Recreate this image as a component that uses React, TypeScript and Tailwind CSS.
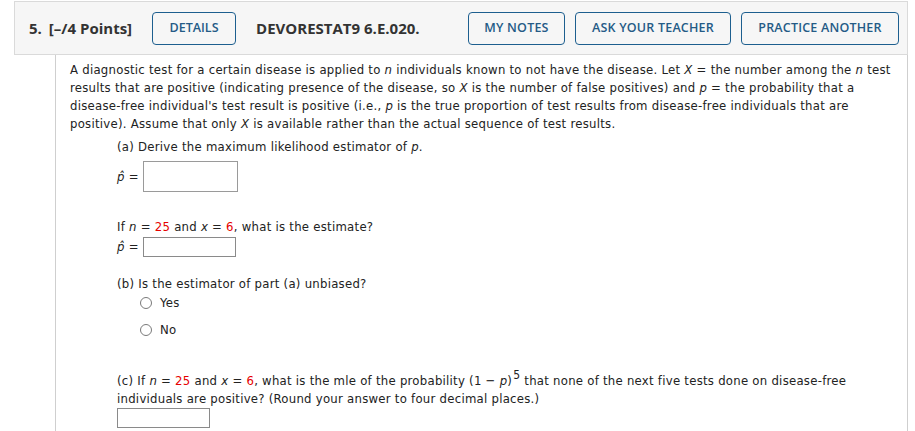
import React from "react";

const body = { fontFamily: '"DejaVu Sans Condensed", "DejaVu Sans", sans-serif' };
const head = { fontFamily: '"Open Sans", "Liberation Sans", sans-serif' };

const V = ({ children }: { children: React.ReactNode }) => <i className="italic">{children}</i>;
const Red = ({ children }: { children: React.ReactNode }) => <span className="text-[#e60000]">{children}</span>;
const PHat = () => <i className="italic">p̂</i>;

const HeaderButton = ({ label, width }: { label: string; width: string }) => (
  <button
    className={`h-[33px] ${width} rounded-[4px] border border-[#1d5f8f] bg-[#f6f6f6] text-[12.5px] font-semibold tracking-[0.2px] text-[#245b86] uppercase`}
  >
    {label}
  </button>
);

export default function App() {
  return (
    <div className="min-h-screen bg-white text-[#222]">
      <div className="ml-[14px] w-[894px] pt-px">
        <div className="flex h-[54px] items-center border border-[#dadada] bg-[#f6f6f6] pl-[14px] text-[#333]" style={head}>
          <span className="text-[15px] font-bold">5.</span>
          <span className="ml-[7px] text-[15px] font-bold">[–/4 Points]</span>
          <button className="ml-[20px] h-[33px] w-[84px] rounded-[4px] border border-[#1d5f8f] text-[12.5px] font-semibold text-[#245b86]">
            DETAILS
          </button>
          <span className="ml-[20px] text-[15px] font-bold">DEVORESTAT9 6.E.020.</span>
          <div className="ml-auto mr-[8px] flex gap-[10px]">
            <HeaderButton label="My Notes" width="w-[97px]" />
            <HeaderButton label="Ask Your Teacher" width="w-[156px]" />
            <HeaderButton label="Practice Another" width="w-[158px]" />
          </div>
        </div>

        <div
          className="ml-[41px] h-[376px] border-x border-[#cfcfcf] pl-[14px] pr-[10px] pt-[6px] text-[13px] leading-[18px] tracking-[0.26px]"
          style={body}
        >
          <p>
            A diagnostic test for a certain disease is applied to <V>n</V> individuals known to not have the disease. Let <V>X</V> = the number among the <V>n</V> test
            results that are positive (indicating presence of the disease, so <V>X</V> is the number of false positives) and <V>p</V> = the probability that a
            disease-free individual's test result is positive (i.e., <V>p</V> is the true proportion of test results from disease-free individuals that are
            positive). Assume that only <V>X</V> is available rather than the actual sequence of test results.
          </p>

          <div className="ml-[47px]">
            <p className="mt-[5px]">(a) Derive the maximum likelihood estimator of <V>p</V>.</p>
            <div className="mt-[5px] flex items-center">
              <span className="w-[26px]"><PHat /> =</span>
              <div className="h-[31px] w-[95px] border border-[#9a9a9a] bg-white" />
            </div>

            <p className="mt-[26px]">
              If <V>n</V> = <Red>25</Red> and <V>x</V> = <Red>6</Red>, what is the estimate?
            </p>
            <div className="mt-px flex items-center">
              <span className="w-[26px]"><PHat /> =</span>
              <div className="h-[20px] w-[93px] border border-[#8a8a8a] bg-white" />
            </div>

            <p className="mt-[18px]">(b) Is the estimator of part (a) unbiased?</p>
            <div className="ml-[23px] mt-px flex flex-col gap-[9px]">
              {["Yes", "No"].map((o) => (
                <label key={o} className="flex items-center">
                  <span className="h-[12px] w-[12px] rounded-full border border-[#7a7a7a] bg-white" />
                  <span className="ml-[8px]">{o}</span>
                </label>
              ))}
            </div>

            <p className="mt-[33px]">
              (c) If <V>n</V> = <Red>25</Red> and <V>x</V> = <Red>6</Red>, what is the mle of the probability (1 − <V>p</V>)
              <sup className="top-[-6px] ml-px text-[12px]">5</sup> that none of the next five tests done on disease-free
              individuals are positive? (Round your answer to four decimal places.)
            </p>
            <div className="h-[20px] w-[93px] border border-[#8a8a8a] bg-white" />
          </div>
        </div>
      </div>
    </div>
  );
}
